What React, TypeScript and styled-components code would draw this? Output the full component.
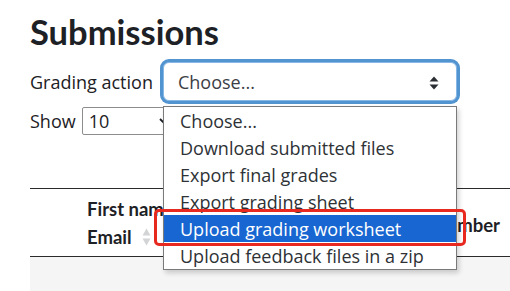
import React from "react";
import styled, { createGlobalStyle } from "styled-components";

const GlobalStyle = createGlobalStyle`
  html, body { margin: 0; padding: 0; background: #ffffff; }
  body {
    font-family: "Open Sans", "Noto Sans", sans-serif;
    font-size: 18px;
    color: #1d2125;
    overflow: hidden;
  }
`;

const Page = styled.div`
  position: relative;
  width: 510px;
  height: 291px;
  overflow: hidden;
  padding-left: 30px;
  box-sizing: border-box;
`;

const Heading = styled.h2`
  margin: 0;
  padding-top: 11px;
  font-family: "Lato", sans-serif;
  font-weight: 700;
  font-size: 34.5px;
  line-height: 41px;
  color: #1d2125;
`;

const FormRow = styled.div<{ $top: number; $gap: number }>`
  display: flex;
  align-items: center;
  gap: ${(p) => p.$gap}px;
  margin-top: ${(p) => p.$top}px;
`;

const Label = styled.span`
  font-size: 18px;
  line-height: 24px;
  color: #1d2125;
`;

const ActionSelect = styled.div`
  position: relative;
  box-sizing: border-box;
  width: 294px;
  height: 39px;
  margin-left: 10px;
  border: 1px solid #86b7e6;
  border-radius: 6px;
  box-shadow: 0 0 0 3px #5294d0;
  display: flex;
  align-items: center;
  padding-left: 14px;
  font-size: 18px;
  line-height: 24px;
  color: #3b4046;
  background: #fff;
`;

const UpDown = styled.svg`
  position: absolute;
  right: 17px;
  top: 13px;
`;

const ShowSelect = styled.div`
  position: relative;
  box-sizing: border-box;
  width: 92px;
  height: 28px;
  border: 1px solid #8d8d8d;
  border-radius: 2px;
  display: flex;
  align-items: center;
  padding-left: 6px;
  font-size: 18px;
  line-height: 24px;
  color: #1d2125;
`;

const Chevron = styled.svg`
  position: absolute;
  left: 76px;
  top: 10px;
`;

const Table = styled.div`
  margin-top: 53px;
  border-top: 1px solid #2b2b2b;
`;

const HeaderRow = styled.div`
  display: grid;
  grid-template-columns: 57px 1fr auto;
  align-items: center;
  height: 67px;
  border-bottom: 1px solid #2b2b2b;
  font-family: "Lato", sans-serif;
  font-weight: 700;
  font-size: 18.5px;
  line-height: 28px;
  color: #1d2125;
`;

const NameCell = styled.div`
  display: flex;
  flex-direction: column;
  grid-column: 2;
  padding-top: 1px;
  white-space: nowrap;
`;

const SortLine = styled.div`
  display: flex;
  align-items: center;
  gap: 10px;
`;

const EndCell = styled.div`
  padding-right: 10px;
  padding-top: 5px;
  white-space: nowrap;
`;

const Body = styled.div`
  height: 40px;
  background: #f5f5f5;
`;

const OptionList = styled.ul`
  position: absolute;
  left: 163px;
  top: 106px;
  width: 294px;
  margin: 0;
  padding: 0;
  list-style: none;
  box-sizing: border-box;
  background: #ffffff;
  border: 1px solid #7a7a7a;
  box-shadow: 2px 3px 5px rgba(0, 0, 0, 0.18);
`;

const Option = styled.li<{ $active?: boolean }>`
  box-sizing: border-box;
  height: 27px;
  padding-top: 2px;
  line-height: 25px;
  padding-left: 16px;
  font-size: 18px;
  white-space: nowrap;
  color: ${(p) => (p.$active ? "#ffffff" : "#2e3236")};
  background: ${(p) => (p.$active ? "#1866d1" : "transparent")};
`;

const Callout = styled.div`
  position: absolute;
  left: 154px;
  top: 209px;
  width: 312px;
  height: 37px;
  box-sizing: border-box;
  border: 3.5px solid #e8291f;
  border-radius: 5px;
  pointer-events: none;
`;

const options = [
  "Choose...",
  "Download submitted files",
  "Export final grades",
  "Export grading sheet",
  "Upload grading worksheet",
  "Upload feedback files in a zip",
];

export default function App() {
  return (
    <>
      <GlobalStyle />
      <Page>
        <Heading>Submissions</Heading>
        <FormRow $top={10} $gap={0}>
          <Label>Grading action</Label>
          <ActionSelect>
            Choose...
            <UpDown width="10" height="14" viewBox="0 0 10 14">
              <path d="M5 0.5 L9.5 5.5 H0.5 Z" fill="#2b2f33" />
              <path d="M5 13.5 L9.5 8.5 H0.5 Z" fill="#2b2f33" />
            </UpDown>
          </ActionSelect>
        </FormRow>
        <FormRow $top={6} $gap={6}>
          <Label>Show</Label>
          <ShowSelect>
            10
            <Chevron width="10" height="7" viewBox="0 0 10 7">
              <path d="M1 1 L5 5 L9 1" fill="none" stroke="#1d2125" strokeWidth="1.8" />
            </Chevron>
          </ShowSelect>
        </FormRow>
        <Table>
          <HeaderRow>
            <NameCell>
              <span>First name</span>
              <SortLine>
                <span>Email</span>
                <svg width="9" height="18" viewBox="0 0 9 18">
                  <path d="M4.5 0.5 L8.5 7.5 H0.5 Z" fill="#d2d4d6" />
                  <path d="M4.5 17.5 L8.5 10.5 H0.5 Z" fill="#d2d4d6" />
                </svg>
              </SortLine>
            </NameCell>
            <EndCell>ID number</EndCell>
          </HeaderRow>
          <Body />
        </Table>
        <OptionList>
          {options.map((o, i) => (
            <Option key={o} $active={i === 4}>
              {o}
            </Option>
          ))}
        </OptionList>
        <Callout />
      </Page>
    </>
  );
}
